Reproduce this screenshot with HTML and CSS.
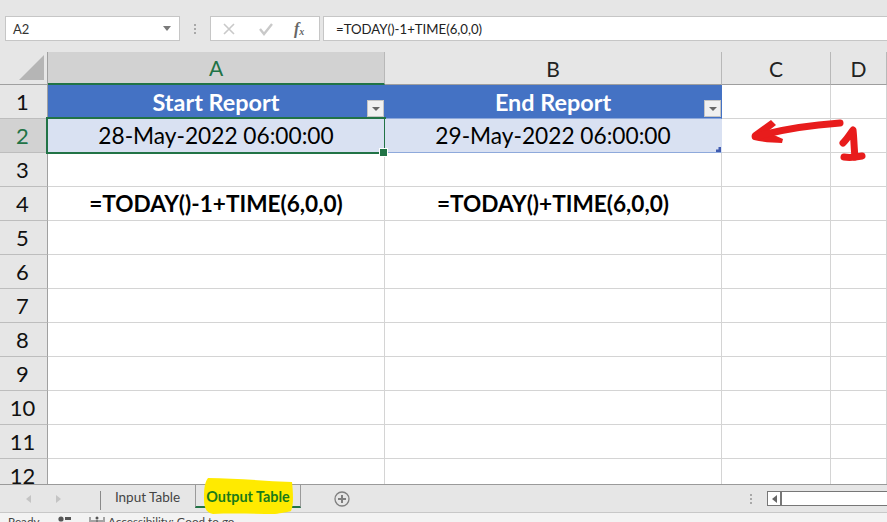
FILE: index.html
```html
<!DOCTYPE html>
<html lang="en">
<head>
<meta charset="utf-8">
<title>Output Table</title>
<link rel="stylesheet" href="styles.css">
</head>
<body>
<div class="app">
  <div class="formula-row">
    <div class="name-box"><span>A2</span><i class="caret"></i></div>
    <div class="vdots"><b></b><b></b><b></b></div>
    <div class="fx-box">
      <svg class="fx-x" width="14" height="14" viewBox="0 0 14 14"><path d="M2 2l10 10M12 2L2 12" stroke="#c9c9c9" stroke-width="1.6" fill="none"/></svg>
      <svg class="fx-c" width="16" height="14" viewBox="0 0 16 14"><path d="M2 7l4 5 8-10" stroke="#c9c9c9" stroke-width="2.4" fill="none"/></svg>
      <span class="fx-f">f<sub>x</sub></span>
    </div>
    <div class="formula">=TODAY()-1+TIME(6,0,0)</div>
  </div>

  <div class="sheet">
    <div class="corner"><i></i></div>
    <div class="ch sel">A</div>
    <div class="ch">B</div>
    <div class="ch">C</div>
    <div class="ch">D</div>

    <div class="rh">1</div>
    <div class="c th">Start Report<span class="filter"><i></i></span></div>
    <div class="c th">End Report<span class="filter"><i></i></span></div>
    <div class="c"></div><div class="c"></div>

    <div class="rh rsel">2</div>
    <div class="c td active">28-May-2022 06:00:00<span class="handle"></span></div>
    <div class="c td">29-May-2022 06:00:00<span class="resize"></span></div>
    <div class="c"></div><div class="c"></div>

    <div class="rh">3</div><div class="c"></div><div class="c"></div><div class="c"></div><div class="c"></div>

    <div class="rh">4</div>
    <div class="c note">=TODAY()-1+TIME(6,0,0)</div>
    <div class="c note">=TODAY()+TIME(6,0,0)</div>
    <div class="c"></div><div class="c"></div>

    <div class="rh">5</div><div class="c"></div><div class="c"></div><div class="c"></div><div class="c"></div>
    <div class="rh">6</div><div class="c"></div><div class="c"></div><div class="c"></div><div class="c"></div>
    <div class="rh">7</div><div class="c"></div><div class="c"></div><div class="c"></div><div class="c"></div>
    <div class="rh">8</div><div class="c"></div><div class="c"></div><div class="c"></div><div class="c"></div>
    <div class="rh">9</div><div class="c"></div><div class="c"></div><div class="c"></div><div class="c"></div>
    <div class="rh">10</div><div class="c"></div><div class="c"></div><div class="c"></div><div class="c"></div>
    <div class="rh">11</div><div class="c"></div><div class="c"></div><div class="c"></div><div class="c"></div>
    <div class="rh">12</div><div class="c"></div><div class="c"></div><div class="c"></div><div class="c"></div>
  </div>

  <div class="tabbar">
    <div class="tab-nav">
      <svg width="8" height="10" viewBox="0 0 8 10"><path d="M6 1v8L1 5z" fill="#c4c4c4"/></svg>
      <svg width="8" height="10" viewBox="0 0 8 10"><path d="M2 1v8l5-4z" fill="#c4c4c4"/></svg>
    </div>
    <div class="tab">Input Table</div>
    <div class="tab current">
      <svg class="hl" width="106" height="40" viewBox="0 0 106 40"><path d="M13 0c25 0 55 3 84 4 1 10 2 22-1 29-3 1-10 2-16 3-20 0-42-1-62 0-6-1-9-5-9-15 0-7 0-16 4-21z"/></svg>
      <span>Output Table</span>
    </div>
    <svg class="add" width="16" height="16" viewBox="0 0 16 16"><circle cx="8" cy="8" r="7" fill="none" stroke="#7f7f7f" stroke-width="1.3"/><path d="M8 4v8M4 8h8" stroke="#7f7f7f" stroke-width="2"/></svg>
    <div class="spacer"></div>
    <div class="vdots small"><b></b><b></b><b></b></div>
    <div class="hscroll"><span class="left"><i></i></span><span class="track"></span></div>
  </div>

  <div class="status">
    <span class="ready">Ready</span>
    <svg class="macro" width="16" height="10" viewBox="0 0 16 10"><circle cx="3" cy="3" r="2.6" fill="#555"/><rect x="7" y="1" width="6" height="3" fill="#555"/><rect x="1" y="6" width="12" height="4" fill="#555"/></svg>
    <svg class="acc" width="16" height="12" viewBox="0 0 16 12"><circle cx="8" cy="2" r="1.5" fill="#555"/><path d="M2 5h12M8 4v8M1 1v9M15 1v9" stroke="#555" fill="none"/></svg>
    <span>Accessibility: Good to go</span>
  </div>

  <svg class="marks" width="887" height="522" viewBox="0 0 887 522">
    <path class="ink-fill" d="M771 120l5 5-9 7 16 7-1 4c-9 0-20-1-28-3-3-1-3-5-1-7z"/>
    <g class="ink">
      <path d="M840 123c-28 2-60 7-82 13"/>
      <path d="M843 143c4-4 7-9 10-13 1 9 1 18 2 27"/>
      <path d="M844 157c6 1 13 0 18-1"/>
    </g>
  </svg>
</div>
</body>
</html>
```
FILE: styles.css
```css
* { box-sizing: border-box; }
html, body { margin: 0; padding: 0; }
body { background: #e6e6e6; font-family: "Lato", "Open Sans", sans-serif; color: #000; }
.app { position: relative; width: 887px; height: 522px; overflow: hidden; display: flex; flex-direction: column; }

/* formula bar */
.formula-row { height: 52px; flex: none; padding: 16px 0 11px 5px; display: flex; align-items: stretch; }
.name-box { width: 175px; background: #fff; border: 1px solid #c6c6c6; display: flex; align-items: center; justify-content: space-between; padding: 0 8px 0 7px; font-size: 13px; color: #333; }
.caret { width: 0; height: 0; border: 4px solid transparent; border-top: 5px solid #7a7a7a; border-bottom: 0; }
.vdots { width: 30px; display: flex; flex-direction: column; align-items: center; justify-content: center; gap: 2px; }
.vdots b { width: 2px; height: 2px; background: #a8a8a8; display: block; }
.fx-box { width: 110px; background: #fff; border: 1px solid #c6c6c6; display: flex; align-items: center; padding-left: 11px; }
.fx-x { margin-right: 22px; }
.fx-c { margin-right: 20px; }
.fx-f { font-family: "Liberation Serif", serif; font-style: italic; font-weight: 700; font-size: 16px; color: #666; line-height: 1; }
.fx-f sub { font-size: 10px; vertical-align: -1px; }
.formula { flex: 1; margin-left: 3px; background: #fff; border: 1px solid #c6c6c6; border-right: 0; padding-left: 12px; display: flex; align-items: center; font-size: 13.2px; color: #222; }

/* grid */
.sheet { flex: none; height: 432px; background: #fff; display: grid; grid-template-columns: 48px 337px 337px 109px 56px; grid-template-rows: 33px repeat(12, 34px); overflow: hidden; position: relative; }
.corner { background: #e6e6e6; border-right: 1px solid #a0a0a0; border-bottom: 1px solid #a0a0a0; position: relative; }
.corner i { position: absolute; right: 3px; bottom: 4px; width: 0; height: 0; border-style: solid; border-width: 0 0 25px 25px; border-color: transparent transparent #b5b5b5 transparent; }
.ch { background: #e6e6e6; border-right: 1px solid #b8b8b8; border-bottom: 1px solid #9e9e9e; display: flex; align-items: center; justify-content: center; font-size: 21px; color: #222; }
.ch.sel { background: #d2d2d2; border-bottom: 2px solid #217346; color: #217346; }
.rh { background: #e6e6e6; border-right: 1px solid #a0a0a0; border-bottom: 1px solid #bdbdbd; display: flex; align-items: center; justify-content: center; font-size: 22px; color: #111; padding: 0 2px 0 0; }
.rh.rsel { background: #d2d2d2; color: #217346; }
.c { border-right: 1px solid #d4d4d4; border-bottom: 1px solid #d4d4d4; display: flex; align-items: center; justify-content: center; position: relative; font-size: 22.7px; white-space: nowrap; }
.th { background: #4472c4; color: #fff; font-weight: 700; font-size: 23.4px; border-color: #4472c4; border-bottom-color: #8ea9db; }
.td { background: #d9e1f2; border-right-color: #d9e1f2; border-bottom-color: #8ea9db; }
.note { font-weight: 700; font-size: 22.6px; }
.filter { position: absolute; right: 0; bottom: 1px; width: 17px; height: 17px; background: #f0f0f0; border: 1px solid #c4c4c4; display: flex; align-items: center; justify-content: center; }
.filter i { width: 0; height: 0; border: 4px solid transparent; border-top: 4px solid #666; border-bottom: 0; }
.active::after { content: ""; position: absolute; left: -2px; top: -2px; right: -2px; bottom: -2px; border: 2px solid #217346; pointer-events: none; }
.handle { position: absolute; z-index: 2; right: -3px; bottom: -4px; width: 7px; height: 7px; background: #217346; outline: 1px solid #fff; }
.resize { position: absolute; right: 0; bottom: 0; width: 5px; height: 5px; background: #3f5bb0; clip-path: polygon(100% 0, 100% 100%, 0 100%, 0 50%, 50% 50%, 50% 0); }

/* tabs */
.tabbar { flex: none; height: 29px; border-top: 1px solid #9a9a9a; border-bottom: 1px solid #c8c8c8; background: #e6e6e6; display: flex; align-items: stretch; position: relative; z-index: 1; }
.tab-nav { width: 100px; display: flex; align-items: center; gap: 21px; padding-left: 25px; }
.tab { width: 95px; font-size: 13.5px; color: #444; display: flex; align-items: center; justify-content: center; position: relative; padding-bottom: 3px; }
.tab:not(.current)::before { content: ""; position: absolute; left: 0; top: 6px; bottom: 2px; width: 1px; background: #8a8a8a; }
.tab.current { width: 106px; color: #1a7a1a; font-weight: 700; font-size: 14.4px; border-left: 1px solid #9a9a9a; border-right: 1px solid #9a9a9a; border-bottom: 2px solid #217346; margin-top: -1px; margin-bottom: 4px; padding: 2px 0 0; }
.tab.current span { position: relative; }
.hl { position: absolute; left: -1px; top: -6px; }
.hl path { fill: #ffea00; }
.add { align-self: center; margin-left: 33px; }
.spacer { flex: 1; }
.vdots.small { width: 30px; flex: none; }
.hscroll { width: 120px; margin: 6px 0 6px 1px; display: flex; border: 1px solid #777; border-right: 0; background: #fff; }
.hscroll .left { width: 14px; display: flex; align-items: center; justify-content: center; border-right: 2px solid #777; }
.hscroll .left i { width: 0; height: 0; border: 4px solid transparent; border-right: 5px solid #666; border-left: 0; }
.track { flex: 1; }

/* status */
.status { flex: 1; background: #f3f3f3; display: flex; align-items: flex-start; padding: 1px 0 0 8px; font-size: 11.7px; line-height: 14px; color: #444; white-space: nowrap; }
.ready { width: 50px; }
.macro { margin-right: 15px; margin-top: 2px; }
.acc { margin-right: 3px; margin-top: 2px; }

/* marker overlay */
.marks { position: absolute; left: 0; top: 0; pointer-events: none; z-index: 2; }
.ink-fill { fill: #e81c1c; }
.ink path { fill: none; stroke: #e81c1c; stroke-width: 7; stroke-linecap: round; stroke-linejoin: round; }
```
